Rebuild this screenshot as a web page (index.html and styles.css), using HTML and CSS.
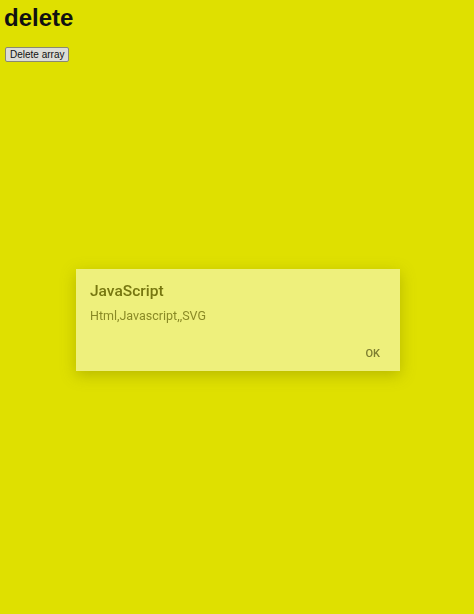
FILE: index.html
```html
<!DOCTYPE html>
<html>
<head>
<meta charset="utf-8">
<link rel="stylesheet" href="styles.css">
</head>
<body>
<h1 class="title">delete</h1>
<button class="btn">Delete array</button>

<div class="overlay">
  <div class="dialog">
    <div class="dialog-title">JavaScript</div>
    <div class="dialog-body">Html,Javascript,,SVG</div>
    <div class="dialog-actions"><span class="dialog-ok">OK</span></div>
  </div>
</div>
</body>
</html>
```
FILE: styles.css
```css
html, body {
  margin: 0;
  height: 100%;
}
body {
  background: #dfe000;
  padding: 4px 4px;
  box-sizing: border-box;
  font-family: "Liberation Sans", Arial, sans-serif;
}
.title {
  margin: 0;
  font-size: 24px;
  line-height: 28px;
  font-weight: bold;
  color: #111;
}
.btn {
  margin-top: 15px;
  margin-left: 1px;
  font-family: "Liberation Sans", Arial, sans-serif;
  font-size: 10px;
  padding: 1px 4px;
  background: #dcdcd6;
  border: 1px solid #8a8a70;
  border-radius: 2px;
  color: #111;
}
.overlay {
  position: fixed;
  inset: 0;
  display: flex;
  align-items: flex-start;
  justify-content: flex-start;
  padding: 269px 0 0 76px;
}
.dialog {
  width: 324px;
  height: 102px;
  box-sizing: border-box;
  background: #eef07c;
  box-shadow: 0 4px 14px rgba(110, 110, 0, 0.35);
  font-family: Roboto, "Noto Sans", sans-serif;
  padding: 13px 14px 0 14px;
  display: flex;
  flex-direction: column;
}
.dialog-title {
  font-size: 15.5px;
  font-weight: 500;
  color: #76760f;
  line-height: 18px;
}
.dialog-body {
  margin-top: 8px;
  font-size: 12.5px;
  color: #8a8a25;
  line-height: 16px;
}
.dialog-actions {
  margin-top: 23px;
  display: flex;
  justify-content: flex-end;
  padding-right: 6px;
}
.dialog-ok {
  font-size: 11px;
  font-weight: 500;
  color: #7d7d30;
}
```
